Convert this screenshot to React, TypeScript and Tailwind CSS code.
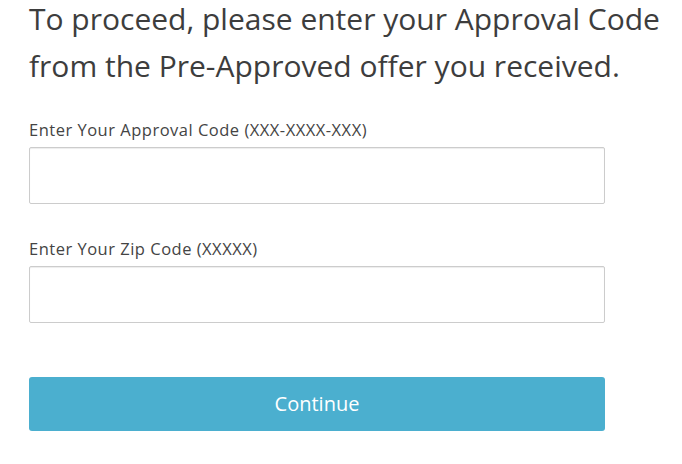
export default function App(): React.ReactElement {
  return (
    <div className="min-h-screen bg-white pl-[29px] font-['Open_Sans',sans-serif] text-[#3d3d3d]">
      <h1 className="text-[30px] font-normal">
        <span className="block leading-[37px]">To proceed, please enter your Approval Code</span>
        <span className="block leading-[57px]">from the Pre-Approved offer you received.</span>
      </h1>
      <form className="mt-[24px] w-[576px]">
        <Field label="Enter Your Approval Code (XXX-XXXX-XXX)" name="approval" />
        <div className="mt-[33px]">
          <Field label="Enter Your Zip Code (XXXXX)" name="zip" />
        </div>
        <button
          className="mt-[54px] flex h-[54px] w-full items-center justify-center rounded-[3px] bg-[#4bafcf] text-[20px] text-white"
          type="button"
        >
          Continue
        </button>
      </form>
    </div>
  );
}

function Field({ label, name }: { label: string; name: string }): React.ReactElement {
  return (
    <label className="block">
      <span className="block text-[16.5px] leading-[24px] tracking-[0.5px] text-[#444]">{label}</span>
      <input
        className="mt-[5px] block h-[57px] w-full rounded-[2px] border border-[#cccccc] bg-white px-3 shadow-[inset_0_1px_1px_rgba(0,0,0,0.075)] outline-none"
        name={name}
        type="text"
      />
    </label>
  );
}
